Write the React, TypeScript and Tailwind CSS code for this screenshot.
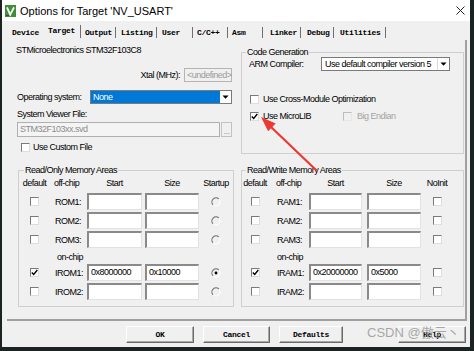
const sans =
	"font-['Liberation_Sans',Arial,sans-serif] text-[9px] leading-[12px] tracking-[-0.5px] text-black";
const mono =
	"font-['Liberation_Mono','Courier_New',monospace] font-bold text-[8px] tracking-[-0.3px] text-black";
const sunken =
	"border-t-2 border-l-2 border-r border-b border-t-[#8a8a8a] border-l-[#8a8a8a] border-r-[#e2e2e2] border-b-[#e2e2e2]";

const tabs = [
	{ name: "Device", w: "w-[36px]", pl: "pl-[4px]", border: false },
	{ name: "Target", w: "w-[37px]", pl: "pl-[4px]", border: true, active: true },
	{ name: "Output", w: "w-[35px]", pl: "pl-[4px]", border: true },
	{ name: "Listing", w: "w-[41px]", pl: "pl-[5px]", border: true },
	{ name: "User", w: "w-[36px]", pl: "pl-[5px]", border: true },
	{ name: "C/C++", w: "w-[35px]", pl: "pl-[4px]", border: true },
	{ name: "Asm", w: "w-[35px]", pl: "pl-[4px]", border: true },
	{ name: "Linker", w: "w-[38px]", pl: "pl-[7px]", border: true },
	{ name: "Debug", w: "w-[33px]", pl: "pl-[6px]", border: true },
	{ name: "Utilities", w: "w-[52px]", pl: "pl-[6px]", border: true },
];

function CheckBox({ checked = false, disabled = false }: { checked?: boolean; disabled?: boolean }) {
	const look = disabled
		? "bg-[#f0f0f0] border-t-[#bdbdbd] border-l-[#bdbdbd] border-r-[#e6e6e6] border-b-[#e6e6e6]"
		: "bg-white border-t-[#7a7a7a] border-l-[#7a7a7a] border-r-[#dedede] border-b-[#dedede]";

	return (
		<span className={`flex size-[9px] shrink-0 items-center justify-center border ${look}`}>
			{checked ? (
				<svg width="7" height="7" viewBox="0 0 7 7">
					<path d="M0.8 3.4 L2.7 5.4 L6.3 1" stroke="#000" strokeWidth="1.4" fill="none" />
				</svg>
			) : null}
		</span>
	);
}

function Radio({ on = false }: { on?: boolean }) {
	return (
		<svg width="10" height="10" viewBox="0 0 10 10">
			<circle cx="5" cy="5" r="4" fill="#f0f0f0" />
			<path d="M7.9 2.1A4 4 0 0 0 2.1 7.9" stroke="#707070" strokeWidth="1.1" fill="none" />
			<path d="M2.1 7.9A4 4 0 0 0 7.9 2.1" stroke="#ffffff" strokeWidth="1" fill="none" />
			{on ? <circle cx="5" cy="5" r="1.4" fill="#000" /> : null}
		</svg>
	);
}

function DropArrow() {
	return (
		<svg width="7" height="5" viewBox="0 0 7 5">
			<polygon points="0.5,0.5 6.5,0.5 3.5,3.8" fill="#000" />
		</svg>
	);
}

function Field({ width, value = "" }: { width: string; value?: string }) {
	return (
		<div className={`${width} h-[17px] bg-white pl-[2px] ${sunken} leading-[12px]`}>{value}</div>
	);
}

function GroupLegend({ children, ml }: { children: string; ml: string }) {
	return (
		<div className={`-mt-[6px] ${ml} h-[10px] w-fit bg-[#f0f0f0] px-[1px] leading-[10px]`}>
			{children}
		</div>
	);
}

interface MemRow {
	label: string;
	start: string;
	size: string;
	def: boolean;
	extra: boolean;
}

const romOff: MemRow[] = [
	{ label: "ROM1:", start: "", size: "", def: false, extra: false },
	{ label: "ROM2:", start: "", size: "", def: false, extra: false },
	{ label: "ROM3:", start: "", size: "", def: false, extra: false },
];
const romOn: MemRow[] = [
	{ label: "IROM1:", start: "0x8000000", size: "0x10000", def: true, extra: true },
	{ label: "IROM2:", start: "", size: "", def: false, extra: false },
];
const ramOff: MemRow[] = [
	{ label: "RAM1:", start: "", size: "", def: false, extra: false },
	{ label: "RAM2:", start: "", size: "", def: false, extra: false },
	{ label: "RAM3:", start: "", size: "", def: false, extra: false },
];
const ramOn: MemRow[] = [
	{ label: "IRAM1:", start: "0x20000000", size: "0x5000", def: true, extra: false },
	{ label: "IRAM2:", start: "", size: "", def: false, extra: false },
];

function RomRow({ row }: { row: MemRow }) {
	return (
		<div className="flex h-[19px] items-center">
			<div className="flex w-[31px] justify-center">
				<CheckBox checked={row.def} />
			</div>
			<span className="w-[37px] pl-[5px]">{row.label}</span>
			<Field width="w-[55px]" value={row.start} />
			<span className="w-[3px]" />
			<Field width="w-[54px]" value={row.size} />
			<div className="flex w-[34px] justify-center">
				<Radio on={row.extra} />
			</div>
		</div>
	);
}

function RamRow({ row }: { row: MemRow }) {
	return (
		<div className="flex h-[19px] items-center">
			<div className="flex w-[26px] justify-center">
				<CheckBox checked={row.def} />
			</div>
			<span className="w-[41px] pl-[9px]">{row.label}</span>
			<Field width="w-[53px]" value={row.start} />
			<span className="w-[5px]" />
			<Field width="w-[54px]" value={row.size} />
			<div className="flex w-[32px] justify-center">
				<CheckBox checked={row.extra} />
			</div>
		</div>
	);
}

function Button({ label, width }: { label: string; width: string }) {
	return (
		<div
			className={`${width} flex h-[17px] items-center justify-center border border-t-white border-l-white border-r-[#6a6a6a] border-b-[#6a6a6a] bg-[#f0f0f0] shadow-[inset_-1px_-1px_0_#a8a8a8] ${mono}`}
		>
			{label}
		</div>
	);
}

export default function App() {
	return (
		<div className="relative h-[351px] w-[474px] overflow-hidden bg-[#1c2121]">
			<div className={`ml-[2px] flex h-[347px] w-[468px] flex-col bg-[#f0f0f0] ${sans}`}>
				{/* title bar */}
				<div className="flex h-[21px] items-center bg-white pl-[3px] pr-[5px]">
					<svg width="11" height="12" viewBox="0 0 11 12">
						<rect width="11" height="12" fill="#3f8f3a" />
						<path d="M2 2.3 L5.2 9.6 L9 2.3" stroke="#ffffff" strokeWidth="1.8" fill="none" />
						<path d="M1 10.5 L4 10.5" stroke="#1f5a22" strokeWidth="1" />
					</svg>
					<span className="ml-[4px] text-[11px] leading-[14px] tracking-normal">
						Options for Target 'NV_USART'
					</span>
					<svg className="ml-auto" width="9" height="9" viewBox="0 0 9 9">
						<path d="M0.5 0.5 L8.5 8.5 M8.5 0.5 L0.5 8.5" stroke="#222" strokeWidth="1" />
					</svg>
				</div>

				{/* tabs */}
				<div className="flex h-[19px] items-start pl-[6px] pt-[6px]">
					{tabs.map((tab) => (
						<div
							key={tab.name}
							className={`${tab.w} ${tab.pl} ${mono} ${
								tab.active ? "-mt-[2px] h-[13px]" : "h-[11px]"
							} ${tab.border ? "border-r border-[#6f6f6f]" : ""} leading-[11px]`}
						>
							{tab.name}
						</div>
					))}
				</div>

				{/* Target page */}
				<div className="ml-[5px] flex h-[281px] w-[460px] flex-col border-r-2 border-b-2 border-[#a0a0a0] pl-[9px] pr-[1px] pt-[4px]">
					<div className="flex h-[110px] gap-[7px]">
						<div className="w-[218px] pr-[2px]">
							<div className="h-[12px]">STMicroelectronics STM32F103C8</div>
							<div className="mt-[12px] flex h-[14px] items-center justify-end">
								<span>Xtal (MHz):</span>
								<div className="ml-[4px] h-[14px] w-[48px] border border-[#b4b4b4] bg-[#f0f0f0] pl-[2px] leading-[12px] text-[#9a9a9a]">
									&lt;undefined&gt;
								</div>
							</div>
							<div className="mt-[8px] flex h-[14px] items-center pl-[1px]">
								<span>Operating system:</span>
								<div className="ml-auto flex h-[14px] w-[142px] border border-[#7a7a7a] bg-white">
									<div className="flex-1 bg-[#0078d7] pl-[2px] leading-[12px] text-white">None</div>
									<div className="flex w-[11px] items-center justify-center bg-white">
										<DropArrow />
									</div>
								</div>
							</div>
							<div className="mt-[4px] h-[12px] pl-[1px]">System Viewer File:</div>
							<div className="mt-[2px] flex h-[15px] pl-[1px]">
								<div className="h-[15px] w-[203px] border border-[#b0b0b0] bg-[#f4f4f4] pl-[2px] leading-[13px] text-[#8c8c8c]">
									STM32F103xx.svd
								</div>
								<div className="ml-[1px] flex h-[15px] w-[11px] items-end justify-center border border-[#c2c2c2] bg-[#f0f0f0] text-[#9a9a9a] leading-[10px]">
									...
								</div>
							</div>
							<div className="mt-[4px] flex h-[12px] items-center pl-[5px]">
								<CheckBox />
								<span className="ml-[3px]">Use Custom File</span>
							</div>
						</div>

						<div className="w-[223px] pt-[8px]">
							<div className="border border-[#cfcfcf] pb-[30px]">
								<GroupLegend ml="ml-[4px]">Code Generation</GroupLegend>
								<div className="flex h-[14px] items-center pl-[7px]">
									<span className="w-[72px]">ARM Compiler:</span>
									<div className="flex h-[14px] w-[129px] border border-[#7a7a7a] bg-white">
										<div className="flex-1 pl-[3px] leading-[12px]">Use default compiler version 5</div>
										<div className="flex w-[12px] items-center justify-center border-l border-[#dcdcdc]">
											<DropArrow />
										</div>
									</div>
								</div>
								<div className="mt-[21px] flex h-[14px] items-center pl-[8px]">
									<CheckBox />
									<span className="ml-[4px]">Use Cross-Module Optimization</span>
								</div>
								<div className="mt-[3px] flex h-[14px] items-center pl-[8px]">
									<div className="flex w-[93px] items-center">
										<CheckBox checked />
										<span className="ml-[4px]">Use MicroLIB</span>
									</div>
									<CheckBox disabled />
									<span className="ml-[5px] text-[#a3a3a3]">Big Endian</span>
								</div>
							</div>
						</div>
					</div>

					<div className="mt-[16px] flex gap-[7px]">
						<div className="w-[218px]">
							<div className="ml-[2px] w-[216px] border border-[#cfcfcf] pb-[5px]">
								<GroupLegend ml="ml-[5px]">Read/Only Memory Areas</GroupLegend>
								<div className="mt-[1px] flex h-[13px] items-center">
									<span className="w-[31px] text-center">default</span>
									<span className="w-[37px] pl-[4px]">off-chip</span>
									<span className="w-[55px] text-center">Start</span>
									<span className="w-[3px]" />
									<span className="w-[54px] text-center">Size</span>
									<span className="w-[34px] text-center">Startup</span>
								</div>
								<div className="mt-[3px]">
									{romOff.map((row) => (
										<RomRow key={row.label} row={row} />
									))}
								</div>
								<div className="flex h-[14px] items-end pl-[38px]">on-chip</div>
								{romOn.map((row) => (
									<RomRow key={row.label} row={row} />
								))}
							</div>
						</div>

						<div className="w-[223px]">
							<div className="border border-[#cfcfcf] pb-[5px]">
								<GroupLegend ml="ml-[4px]">Read/Write Memory Areas</GroupLegend>
								<div className="mt-[1px] flex h-[13px] items-center">
									<span className="w-[26px] text-center">default</span>
									<span className="w-[41px] pl-[8px]">off-chip</span>
									<span className="w-[53px] text-center">Start</span>
									<span className="w-[5px]" />
									<span className="w-[54px] text-center">Size</span>
									<span className="w-[32px] text-center">NoInit</span>
								</div>
								<div className="mt-[3px]">
									{ramOff.map((row) => (
										<RamRow key={row.label} row={row} />
									))}
								</div>
								<div className="flex h-[14px] items-end pl-[35px]">on-chip</div>
								{ramOn.map((row) => (
									<RamRow key={row.label} row={row} />
								))}
							</div>
						</div>
					</div>
				</div>

				{/* buttons */}
				<div className="mt-[5px] flex pl-[124px]">
					<Button label="OK" width="w-[68px]" />
					<div className="ml-[9px]">
						<Button label="Cancel" width="w-[67px]" />
					</div>
					<div className="ml-[9px]">
						<Button label="Defaults" width="w-[64px]" />
					</div>
					<div className="ml-[55px]">
						<Button label="Help" width="w-[68px]" />
					</div>
				</div>
			</div>

			{/* annotation arrow */}
			<svg className="pointer-events-none absolute left-0 top-0" width="474" height="351" viewBox="0 0 474 351">
				<line x1="316" y1="170" x2="270" y2="126" stroke="#ec3a33" strokeWidth="2.2" strokeLinecap="round" />
				<polygon points="261,117 275.7,123.4 268.1,131.3" fill="#ec3a33" />
			</svg>

			{/* watermark */}
			<div className="pointer-events-none absolute left-[367px] top-[325px] font-['Liberation_Sans','Noto_Sans_CJK_SC',sans-serif] text-[13px] leading-[16px] text-[rgba(140,140,140,0.75)]">
				CSDN @傲云丶
			</div>
		</div>
	);
}
